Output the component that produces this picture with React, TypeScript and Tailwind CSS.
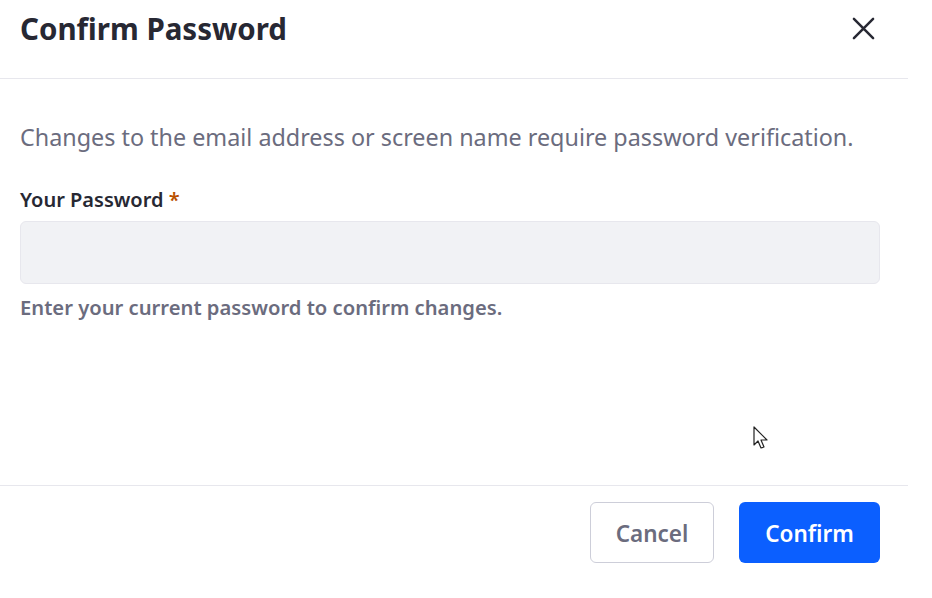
import React from "react";

export default function App() {
  return (
    <div className="w-[932px] h-[598px] bg-white overflow-hidden relative" style={{ fontFamily: '"Noto Sans", "Open Sans", sans-serif' }}>
      <div className="w-[908px] h-full flex flex-col">
        <div className="h-[79px] border-b border-[#e7e7ed] flex items-start justify-between pl-5 pr-[30px] pt-[8px]">
          <h1 className="text-[29.5px] leading-[42px] font-bold text-[#272833]">Confirm Password</h1>
          <button className="mt-[5px] w-[30px] h-[30px] flex items-center justify-center text-[#272833]">
            <svg width="23" height="23" viewBox="0 0 24 24" fill="none" stroke="currentColor" strokeWidth="2.6" strokeLinecap="round">
              <path d="M2 2L22 22M22 2L2 22" />
            </svg>
          </button>
        </div>
        <div className="h-[407px] border-b border-[#e7e7ed] px-5 pt-[40px]">
          <p className="text-[23.35px] leading-[36px] text-[#6b6c7e]">
            Changes to the email address or screen name require password verification.
          </p>
          <div className="mt-[31px]">
            <label className="block text-[20px] leading-[28px] font-semibold text-[#272833]">
              Your Password <span className="text-[#b95000]">*</span>
            </label>
            <div className="mt-[7px] h-[63px] w-[860px] bg-[#f1f2f5] border border-[#e7e7ed] rounded-[6px]" />
            <p className="mt-[9px] text-[20.2px] leading-[28px] font-semibold text-[#6b6c7e]">
              Enter your current password to confirm changes.
            </p>
          </div>
        </div>
        <div className="flex justify-end gap-[25px] pr-[28px] pt-[16px]">
          <button className="w-[124px] h-[61px] pt-[3px] border border-[#cdced9] rounded-[6px] bg-white text-[22.5px] font-semibold text-[#6b6c7e]">
            Cancel
          </button>
          <button className="w-[141px] h-[61px] pt-[3px] rounded-[6px] bg-[#0b5fff] text-[22.5px] font-semibold text-white">
            Confirm
          </button>
        </div>
      </div>
      <svg className="absolute left-[753px] top-[426px]" width="16" height="26" viewBox="0 0 16 26">
        <path d="M1 1 L1 19 L5 15 L8 22 L11 21 L8 14 L14 14 Z" fill="white" stroke="#222" strokeWidth="1.2" strokeLinejoin="round" />
      </svg>
    </div>
  );
}
